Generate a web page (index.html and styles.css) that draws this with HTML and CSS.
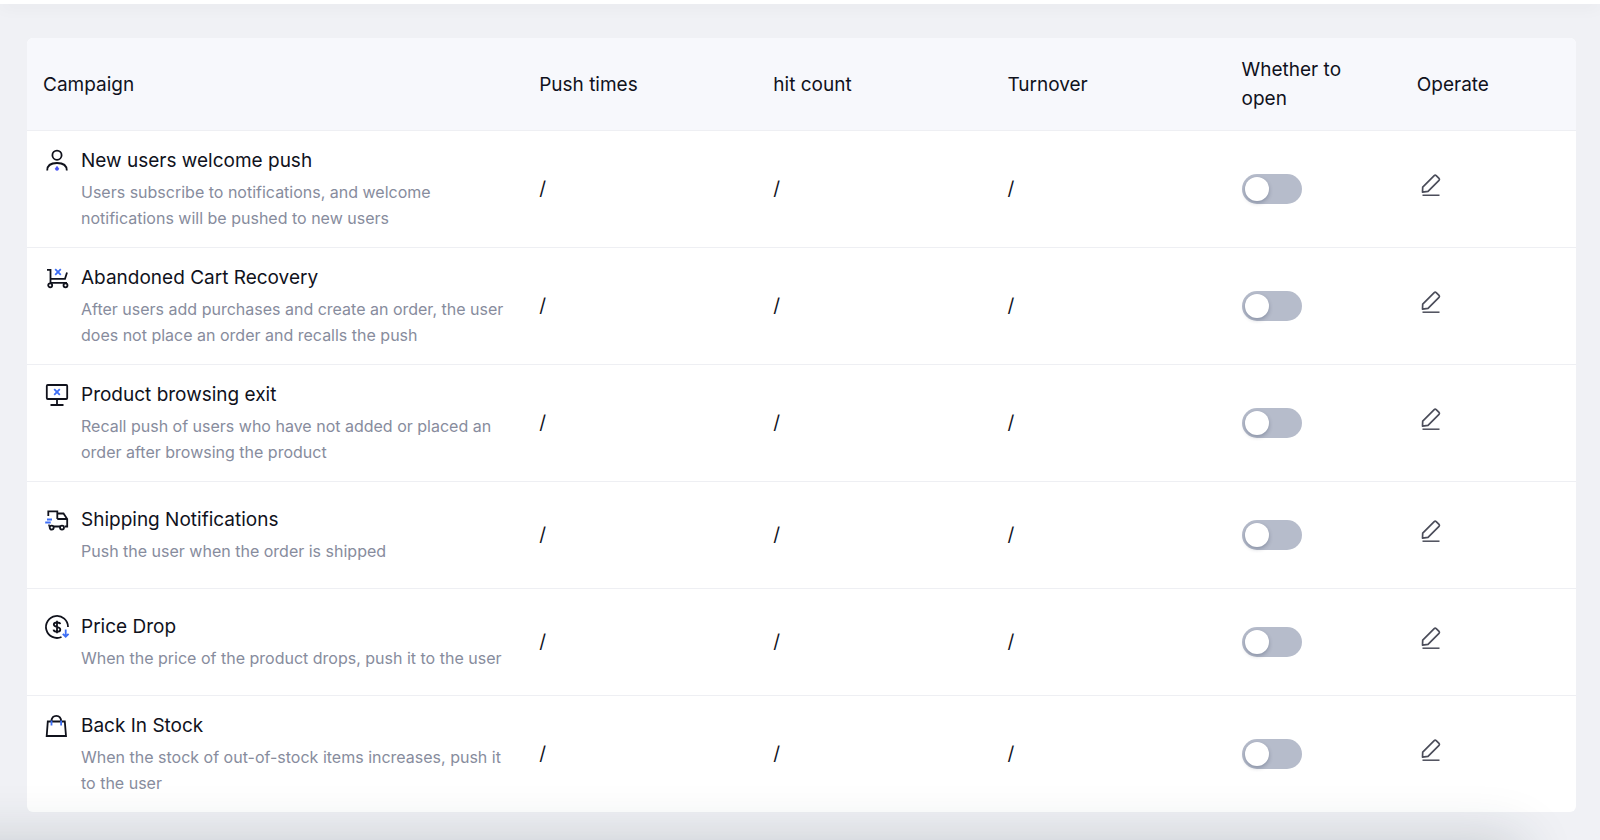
FILE: index.html
```html
<!DOCTYPE html>
<html lang="en">
<head>
<meta charset="utf-8">
<title>Campaigns</title>
<link rel="stylesheet" href="styles.css">
</head>
<body>
<svg class="sprite" aria-hidden="true">
  <symbol id="pencil" viewBox="0 0 24 24"><path d="M3.500 19.200 3.700 14.200 15.200 2.600Q16.200 1.700 17.200 2.600L20 5.400Q20.900 6.400 20 7.400L9 18.300Z" stroke-width="1.700" stroke-linejoin="round"/><path d="M3.500 22.200h17" stroke-width="1.500"/></symbol>
</svg>
<header class="topbar"></header>
<main class="page">
<table class="campaigns">
<colgroup><col class="col-name"><col class="col-stat"><col class="col-stat"><col class="col-stat"><col class="col-open"><col class="col-operate"></colgroup>
<thead>
<tr><th scope="col">Campaign</th><th scope="col">Push times</th><th scope="col">hit count</th><th scope="col">Turnover</th><th scope="col">Whether to open</th><th scope="col">Operate</th></tr>
</thead>
<tbody>
<tr>
<td><div class="campaign"><svg class="icon" viewBox="0 0 24 24"><circle cx="12" cy="6.200" r="4.600"/><path d="M2.200 21.500C2.200 16.500 6 14 12 14s9.800 2.500 9.800 7.500"/><path class="accent-fill" d="M12 16.800l1.800 2.500a1.900 1.900 0 1 1-3.600 0z"/></svg><div><label class="title" for="s1">New users welcome push</label><p class="desc">Users subscribe to notifications, and welcome notifications will be pushed to new users</p></div></div></td>
<td>/</td><td>/</td><td>/</td>
<td><input class="switch" type="checkbox" role="switch" id="s1"></td>
<td><button class="edit" type="button" aria-label="Edit"><svg class="pencil"><use href="#pencil"/></svg></button></td>
</tr>
<tr>
<td><div class="campaign"><svg class="icon" viewBox="0 0 24 24"><path d="M2 3.800h3.500v13h16.500M5.500 12.800h14.500l2-6.300"/><circle cx="5.200" cy="19.300" r="2"/><circle cx="20.500" cy="19.300" r="2"/><path class="accent" d="M10.200 3.200l5.600 5.600M15.800 3.200l-5.600 5.600"/></svg><div><label class="title" for="s2">Abandoned Cart Recovery</label><p class="desc">After users add purchases and create an order, the user does not place an order and recalls the push</p></div></div></td>
<td>/</td><td>/</td><td>/</td>
<td><input class="switch" type="checkbox" role="switch" id="s2"></td>
<td><button class="edit" type="button" aria-label="Edit"><svg class="pencil"><use href="#pencil"/></svg></button></td>
</tr>
<tr>
<td><div class="campaign"><svg class="icon" viewBox="0 0 24 24"><rect x="1.800" y="2" width="20.400" height="14" rx="1"/><path d="M12 16v6M5.500 22h13"/><path class="accent" d="M9.200 6.200l5.600 5.600M14.800 6.200l-5.600 5.600"/></svg><div><label class="title" for="s3">Product browsing exit</label><p class="desc">Recall push of users who have not added or placed an order after browsing the product</p></div></div></td>
<td>/</td><td>/</td><td>/</td>
<td><input class="switch" type="checkbox" role="switch" id="s3"></td>
<td><button class="edit" type="button" aria-label="Edit"><svg class="pencil"><use href="#pencil"/></svg></button></td>
</tr>
<tr>
<td><div class="campaign"><svg class="icon" viewBox="0 0 24 24"><path d="M3.300 8V3.300h9V11M3.300 17.500h1.500M8.500 18.500h6.500M12.300 5.500h6.200l3.700 5.500v7.500h-2.500M12.300 11h9.500"/><circle cx="6.700" cy="19.600" r="2"/><circle cx="17" cy="19.600" r="2"/><path class="accent" d="M2 11.500h5M.2 14.500h5.500"/></svg><div><label class="title" for="s4">Shipping Notifications</label><p class="desc">Push the user when the order is shipped</p></div></div></td>
<td>/</td><td>/</td><td>/</td>
<td><input class="switch" type="checkbox" role="switch" id="s4"></td>
<td><button class="edit" type="button" aria-label="Edit"><svg class="pencil"><use href="#pencil"/></svg></button></td>
</tr>
<tr>
<td><div class="campaign"><svg class="icon" viewBox="0 0 24 24"><path d="M23 12A11 11 0 1 0 16.500 22"/><path d="M15.200 9.200C15 8.100 13.700 7.500 12 7.500c-2 0-3.200.8-3.200 2.100 0 3.200 6.500 1.600 6.500 4.800 0 1.500-1.300 2.300-3.300 2.300s-3.300-.8-3.500-2.100M12 5.700v12.600"/><path class="accent" d="M20.700 14.500v7M17.800 18.800l2.900 2.900 2.900-2.900"/></svg><div><label class="title" for="s5">Price Drop</label><p class="desc">When the price of the product drops, push it to the user</p></div></div></td>
<td>/</td><td>/</td><td>/</td>
<td><input class="switch" type="checkbox" role="switch" id="s5"></td>
<td><button class="edit" type="button" aria-label="Edit"><svg class="pencil"><use href="#pencil"/></svg></button></td>
</tr>
<tr>
<td><div class="campaign"><svg class="icon" viewBox="0 0 24 24"><path d="M2.800 7.500h17l1.200 14.500H1.700zM6.500 7.500C6.500 3.300 8.500 1.800 11.300 1.800s4.800 1.500 4.800 5.700"/><path class="accent" d="M6.500 6.500v5M16.100 6.500v5"/></svg><div><label class="title" for="s6">Back In Stock</label><p class="desc">When the stock of out-of-stock items increases, push it to the user</p></div></div></td>
<td>/</td><td>/</td><td>/</td>
<td><input class="switch" type="checkbox" role="switch" id="s6"></td>
<td><button class="edit" type="button" aria-label="Edit"><svg class="pencil"><use href="#pencil"/></svg></button></td>
</tr>
</tbody>
</table>
</main>
<div class="bottom-shade"></div>
</body>
</html>
```
FILE: styles.css
```css
* { box-sizing: border-box; }
body {
  margin: 0;
  min-height: 100vh;
  overflow: hidden;
  background: #f0f1f5;
  color: #10121c;
  font: 19px/29px Inter, "Liberation Sans", sans-serif;
}
.sprite { display: none; }
.topbar {
  height: 4px;
  background: #fff;
  box-shadow: 0 2px 16px rgba(0, 0, 0, 0.09);
}
.page { padding: 34px 24px 24px 27px; }
.campaigns {
  width: 100%;
  table-layout: fixed;
  border-collapse: separate;
  border-spacing: 0;
  overflow: hidden;
  border-radius: 6px;
  background: #fff;
}
.col-name { width: 32%; }
.col-stat { width: 15.1%; }
.col-open { width: 11.3%; }
.col-operate { width: 11.3%; }
th, td {
  padding: 0 16px;
  border-bottom: 1px solid #eeeff3;
  text-align: left;
  vertical-align: middle;
}
th {
  height: 93px;
  background: #f7f8fc;
  font-weight: 400;
}
td {
  height: 107px;
  padding-top: 15px;
  padding-bottom: 16px;
}
tbody tr:last-child td { border-bottom: 0; }
.campaign { display: flex; gap: 12px; padding-left: 2px; }
.icon {
  flex: none;
  width: 24px;
  height: 24px;
  margin-top: 3px;
  overflow: visible;
  fill: none;
  stroke: #10121c;
  stroke-width: 1.8;
}
.icon .accent { stroke: #3d6ef5; }
.icon .accent-fill { fill: #4a55f5; stroke: none; }
.title { display: block; }
.desc {
  margin: 4px -12px 0 0;
  color: #878c9d;
  font-size: 16px;
  line-height: 26px;
}
.switch {
  display: block;
  appearance: none;
  width: 60px;
  height: 30px;
  margin: 0;
  padding: 3px;
  border-radius: 15px;
  background: #b6bccb;
}
.switch::before {
  content: "";
  display: block;
  width: 24px;
  height: 24px;
  border-radius: 50%;
  background: #fff;
  box-shadow: 0 2px 4px rgba(0, 20, 50, 0.25);
}
.switch:checked { background: #3d6ef5; }
.switch:checked::before { margin-left: auto; }
.edit {
  display: block;
  margin: 0 0 8px;
  padding: 0 2px;
  border: 0;
  background: none;
}
.pencil {
  display: block;
  width: 24px;
  height: 24px;
  fill: none;
  stroke: #4b4d5a;
}
.bottom-shade {
  position: fixed;
  top: 100%;
  left: -80px;
  right: 80px;
  height: 80px;
  box-shadow: 0 0 56px rgba(30, 50, 60, 0.2);
  pointer-events: none;
}
```
